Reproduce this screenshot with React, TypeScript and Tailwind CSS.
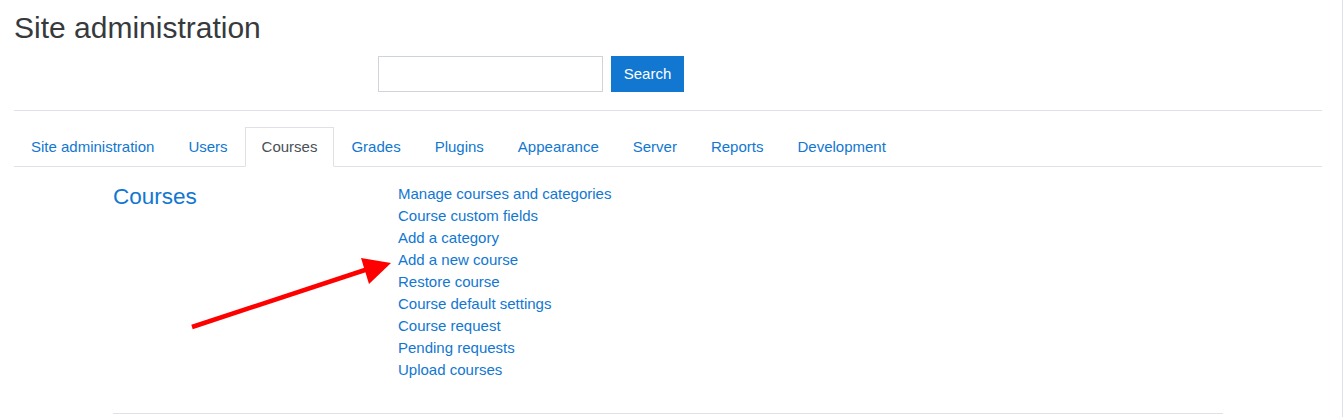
import React from 'react'

const tabs = ['Site administration', 'Users', 'Courses', 'Grades', 'Plugins', 'Appearance', 'Server', 'Reports', 'Development']

const links = [
  'Manage courses and categories',
  'Course custom fields',
  'Add a category',
  'Add a new course',
  'Restore course',
  'Course default settings',
  'Course request',
  'Pending requests',
  'Upload courses',
]

export default function App() {
  return (
    <div
      className="relative min-h-[417px] bg-white border-r border-[#dee2e6] pl-[14px] pr-[20px] pt-[10px] text-[15px]"
      style={{ fontFamily: '"Liberation Sans", Arial, sans-serif' }}
    >
      {/* Page title */}
      <h2 className="text-[30px] leading-[36px] text-[#373a3c] font-normal">Site administration</h2>

      {/* Admin search */}
      <form className="mt-[10px] ml-[364px] flex gap-[8px]" onSubmit={(e) => e.preventDefault()}>
        <input type="text" className="w-[225px] h-[36px] border border-[#ced4da] bg-white px-3 outline-none" />
        <button type="submit" className="h-[36px] w-[73px] bg-[#1177d1] text-white leading-[22px]">
          Search
        </button>
      </form>

      <hr className="mt-[18px] border-0 border-t border-[#dee2e6]" />

      {/* Tabs */}
      <ul className="mt-[16px] flex border-b border-[#dee2e6]">
        {tabs.map((tab) => {
          const active = tab === 'Courses'
          return (
            <li key={tab} className="-mb-px">
              <a
                href="#"
                className={
                  active
                    ? 'block px-4 py-2 leading-[22px] border border-[#dee2e6] border-b-white bg-white text-[#495057]'
                    : 'block px-4 py-2 leading-[22px] border border-transparent text-[#1177d1]'
                }
              >
                {tab}
              </a>
            </li>
          )
        })}
      </ul>

      {/* Category section */}
      <div className="mx-auto w-[1110px] pt-[16px]">
        <div className="flex pb-[32px]">
          <h3 className="w-[285px] shrink-0 text-[22.5px] leading-[27px] text-[#1177d1] font-normal">
            <a href="#">Courses</a>
          </h3>
          <ul className="flex flex-col">
            {links.map((l) => (
              <li key={l} className="leading-[22px]">
                <a href="#" className="text-[#1177d1]">
                  {l}
                </a>
              </li>
            ))}
          </ul>
        </div>
        <div className="border-t border-[#dee2e6]" />
      </div>

      {/* Annotation arrow */}
      <svg className="absolute left-0 top-0 pointer-events-none" width="420" height="360" viewBox="0 0 420 360">
        <line x1="192" y1="327" x2="368" y2="269" stroke="#ff0000" strokeWidth="4.5" />
        <polygon points="391,263 361,258 369,284" fill="#ff0000" />
      </svg>
    </div>
  )
}
